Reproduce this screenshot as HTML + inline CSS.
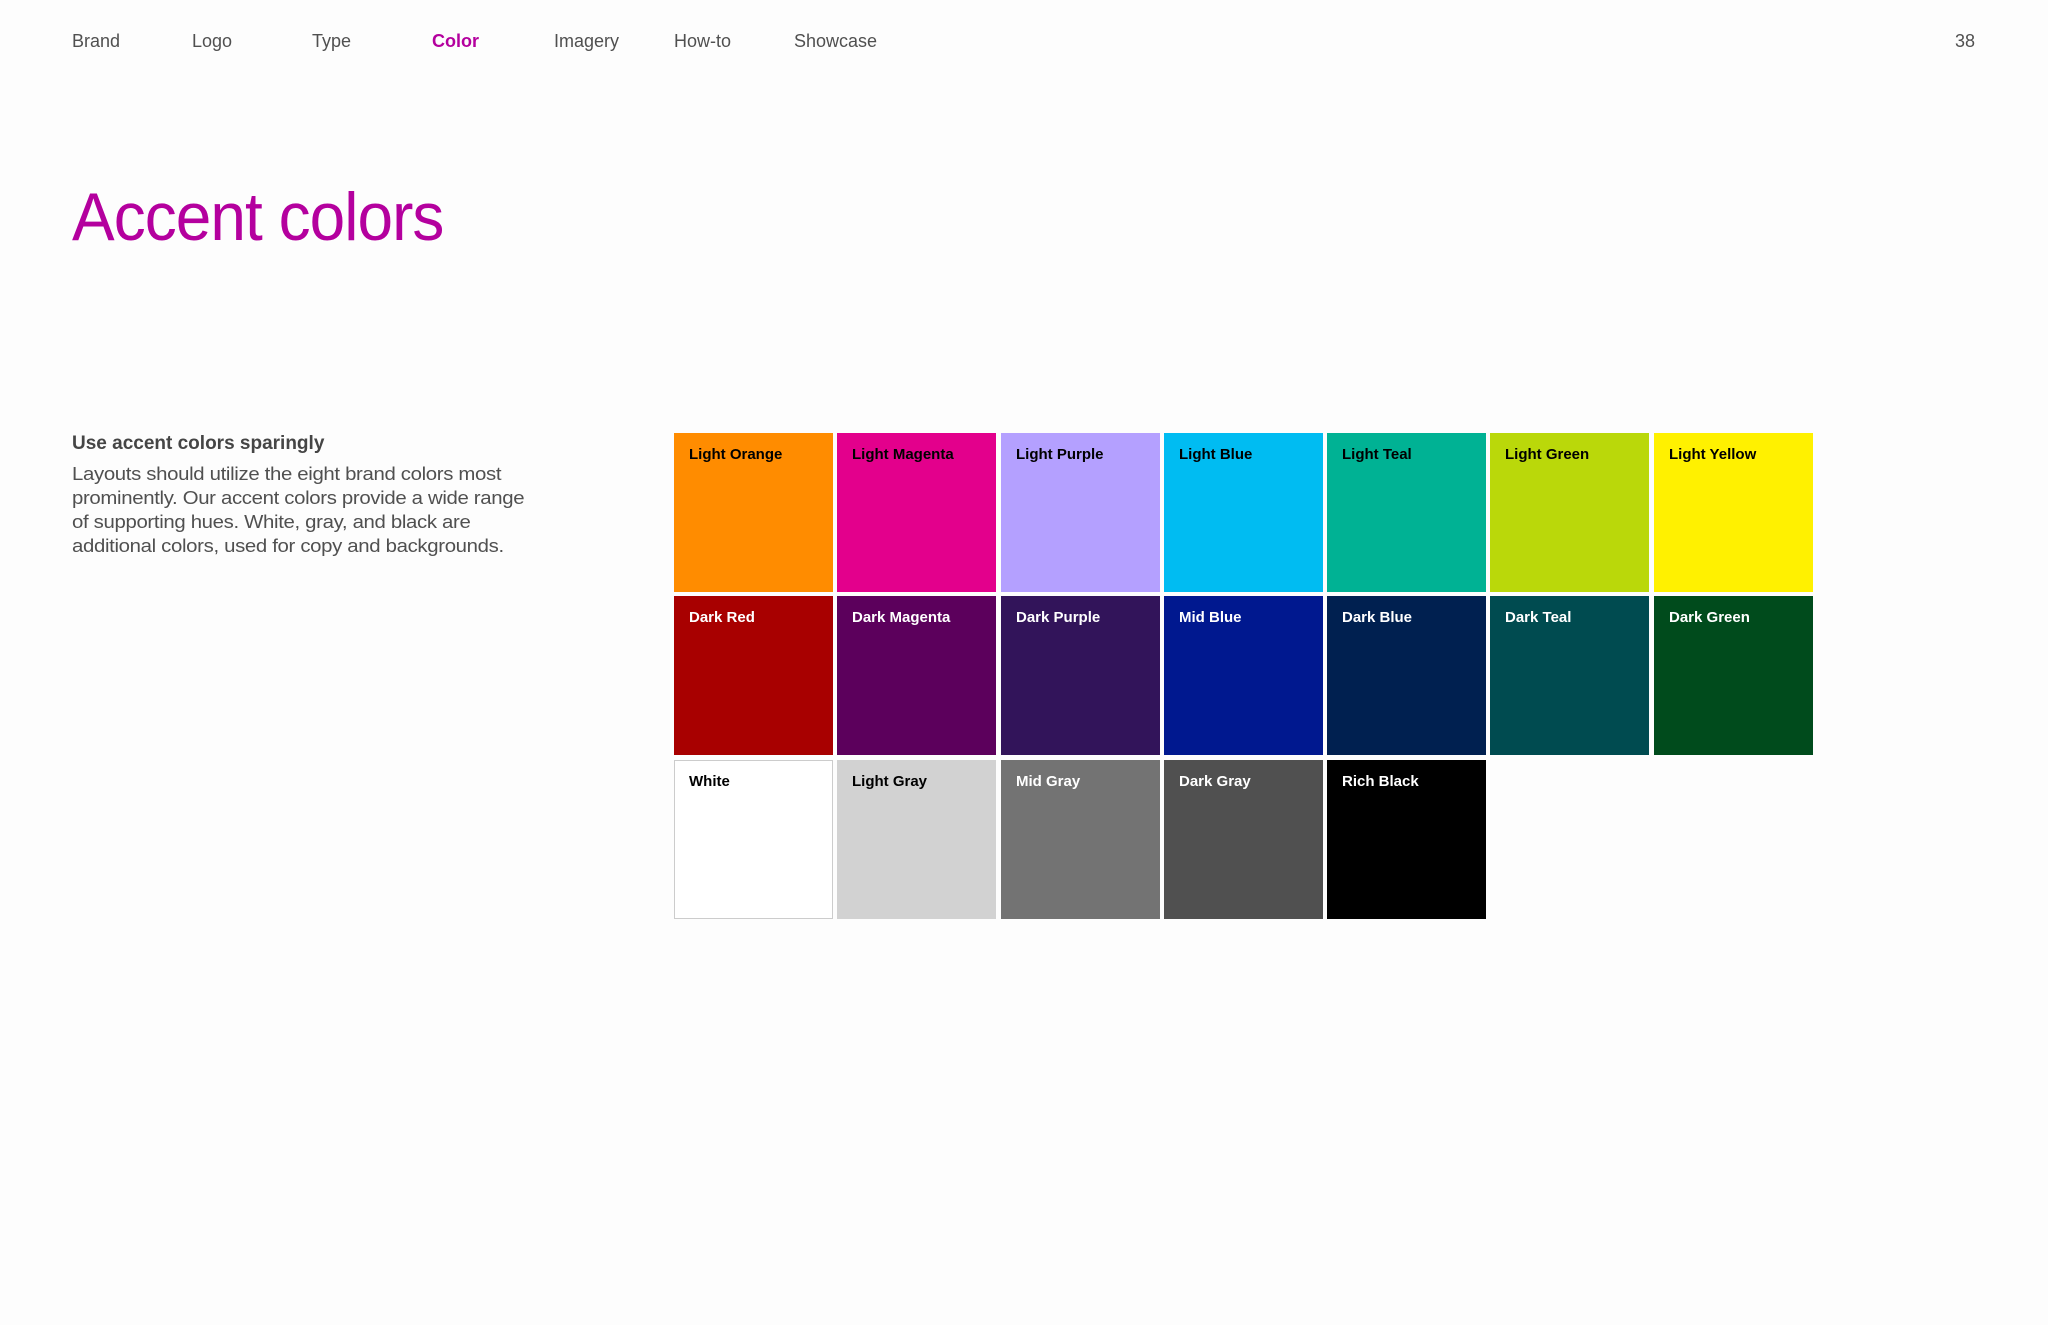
<!DOCTYPE html>
<html><head><meta charset="utf-8"><style>
*{margin:0;padding:0;box-sizing:border-box}
body{width:2048px;height:1325px;background:#fdfdfd;font-family:"Liberation Sans",sans-serif;position:relative;overflow:hidden}
.nav{position:absolute;top:31px;font-size:18px;color:#505050}
.nav.act{color:#b4009e;font-weight:bold}
h1{position:absolute;left:72px;top:178px;font-size:68px;font-weight:normal;color:#b4009e;transform:scaleX(0.94);transform-origin:left;white-space:nowrap;letter-spacing:-1px}
h2{position:absolute;left:72px;top:433px;font-size:19px;color:#454545}
p{position:absolute;left:72px;top:462px;width:560px;font-size:18.5px;line-height:24px;color:#505050;letter-spacing:-0.3px;white-space:nowrap;transform:scaleX(1.1);transform-origin:left}
.t{position:absolute;width:159px;height:159px;font-size:15px;font-weight:bold;padding:13px 0 0 15px}
.w{color:#fff}
</style></head><body>
<div class="nav" style="left:72px">Brand</div>
<div class="nav" style="left:192px">Logo</div>
<div class="nav" style="left:312px">Type</div>
<div class="nav act" style="left:432px">Color</div>
<div class="nav" style="left:554px">Imagery</div>
<div class="nav" style="left:674px">How-to</div>
<div class="nav" style="left:794px">Showcase</div>
<div class="nav" style="left:1955px">38</div>
<h1>Accent colors</h1>
<h2>Use accent colors sparingly</h2>
<p>Layouts should utilize the eight brand colors most<br>prominently. Our accent colors provide a wide range<br>of supporting hues. White, gray, and black are<br>additional colors, used for copy and backgrounds.</p>

<div class="t" style="left:674px;top:433px;background:#ff8c00">Light Orange</div>
<div class="t" style="left:837px;top:433px;background:#e3008c">Light Magenta</div>
<div class="t" style="left:1001px;top:433px;background:#b4a0ff">Light Purple</div>
<div class="t" style="left:1164px;top:433px;background:#00bcf2">Light Blue</div>
<div class="t" style="left:1327px;top:433px;background:#00b294">Light Teal</div>
<div class="t" style="left:1490px;top:433px;background:#bad80a">Light Green</div>
<div class="t" style="left:1654px;top:433px;background:#fff100">Light Yellow</div>

<div class="t w" style="left:674px;top:596px;background:#a80000">Dark Red</div>
<div class="t w" style="left:837px;top:596px;background:#5c005c">Dark Magenta</div>
<div class="t w" style="left:1001px;top:596px;background:#32145a">Dark Purple</div>
<div class="t w" style="left:1164px;top:596px;background:#00188f">Mid Blue</div>
<div class="t w" style="left:1327px;top:596px;background:#002050">Dark Blue</div>
<div class="t w" style="left:1490px;top:596px;background:#004b50">Dark Teal</div>
<div class="t w" style="left:1654px;top:596px;background:#004b1c">Dark Green</div>

<div class="t" style="left:674px;top:760px;background:#fff;border:1px solid #ccc;padding:12px 0 0 14px">White</div>
<div class="t" style="left:837px;top:760px;background:#d2d2d2">Light Gray</div>
<div class="t w" style="left:1001px;top:760px;background:#737373">Mid Gray</div>
<div class="t w" style="left:1164px;top:760px;background:#505050">Dark Gray</div>
<div class="t w" style="left:1327px;top:760px;background:#000">Rich Black</div>
</body></html>
